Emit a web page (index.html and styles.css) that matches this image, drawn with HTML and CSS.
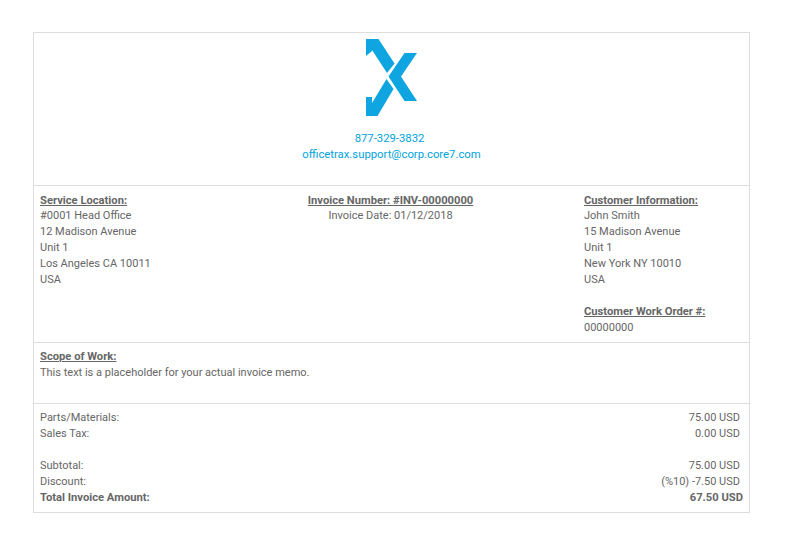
FILE: index.html
```html
<!DOCTYPE html>
<html lang="en">
<head>
<meta charset="utf-8">
<title>Invoice</title>
<link rel="stylesheet" href="styles.css">
</head>
<body>
<main class="invoice">
  <header class="brand">
    <svg class="logo" viewBox="0 0 51 77" width="51" height="77" aria-hidden="true">
      <path class="logo-mark" d="M0 0H12.500L28.500 24.500L21 34L6 11V12L0 17V0Z"/>
      <path class="logo-mark" d="M51 14H38.500L22.500 37.500L38.500 62H51L35 37.500Z"/>
      <path class="logo-mark" d="M0 77H11.500L27.500 50L20.500 40L6 64V58H0Z"/>
    </svg>
    <div class="contact">
      <div class="phone">877-329-3832</div>
      <div>officetrax.support@corp.core7.com</div>
    </div>
  </header>
  <section class="details">
    <div class="col col-left">
      <div class="heading first">Service Location:</div>
      <div>#0001 Head Office</div>
      <div>12 Madison Avenue</div>
      <div>Unit 1</div>
      <div>Los Angeles CA 10011</div>
      <div>USA</div>
    </div>
    <div class="col col-center">
      <div class="heading first">Invoice Number: #INV-00000000</div>
      <div>Invoice Date: 01/12/2018</div>
    </div>
    <div class="col col-right">
      <div class="heading first">Customer Information:</div>
      <div>John Smith</div>
      <div>15 Madison Avenue</div>
      <div>Unit 1</div>
      <div>New York NY 10010</div>
      <div>USA</div>
      <div class="heading spaced">Customer Work Order #:</div>
      <div>00000000</div>
    </div>
  </section>
  <section class="scope">
    <div class="heading">Scope of Work:</div>
    <div>This text is a placeholder for your actual invoice memo.</div>
  </section>
  <section class="totals">
    <div class="row"><span>Parts/Materials:</span><span>75.00 USD</span></div>
    <div class="row"><span>Sales Tax:</span><span>0.00 USD</span></div>
    <div class="row row-gap"><span>Subtotal:</span><span>75.00 USD</span></div>
    <div class="row"><span>Discount:</span><span>(%10) -7.50 USD</span></div>
    <div class="row row-total"><span>Total Invoice Amount:</span><span>67.50 USD</span></div>
  </section>
</main>
</body>
</html>
```
FILE: styles.css
```css
html, body {
  margin: 0;
  padding: 0;
  background: #fff;
}
body {
  padding: 32px 35px 26px 33px;
  font: 11px/16px Roboto, sans-serif;
  color: #666;
}
.invoice {
  border: 1px solid #ddd;
}
.brand {
  height: 153px;
  padding-top: 6px;
  box-sizing: border-box;
  display: flex;
  flex-direction: column;
  align-items: center;
  color: #00a3dc;
  border-bottom: 1px solid #ddd;
}
.logo {
  display: block;
  margin-left: -1px;
}
.logo-mark {
  fill: #0ea5e0;
}
.contact {
  margin-top: 15px;
  text-align: center;
  font-size: 11.3px;
}
.phone {
  padding-right: 4px;
}
.details {
  display: flex;
  height: 157px;
  box-sizing: border-box;
  padding: 6px 6px 0;
  border-bottom: 1px solid #ddd;
}
.col-left {
  width: 263px;
}
.col-center {
  width: 175px;
  text-align: center;
}
.col-right {
  margin-left: 106px;
}
.heading {
  height: 16px;
  font-size: 11.2px;
  font-weight: 700;
  text-decoration: underline;
}
.first {
  padding-top: 1px;
  height: 15px;
}
.spaced {
  margin-top: 16px;
}
.scope {
  height: 61px;
  box-sizing: border-box;
  padding: 6px 6px 0;
  border-bottom: 1px solid #ddd;
}
.totals {
  padding: 6px 9px 6px 6px;
}
.row {
  display: flex;
  justify-content: space-between;
}
.row-gap {
  margin-top: 16px;
}
.row-total {
  font-size: 11.2px;
  font-weight: 700;
  margin-right: -3px;
}
```
